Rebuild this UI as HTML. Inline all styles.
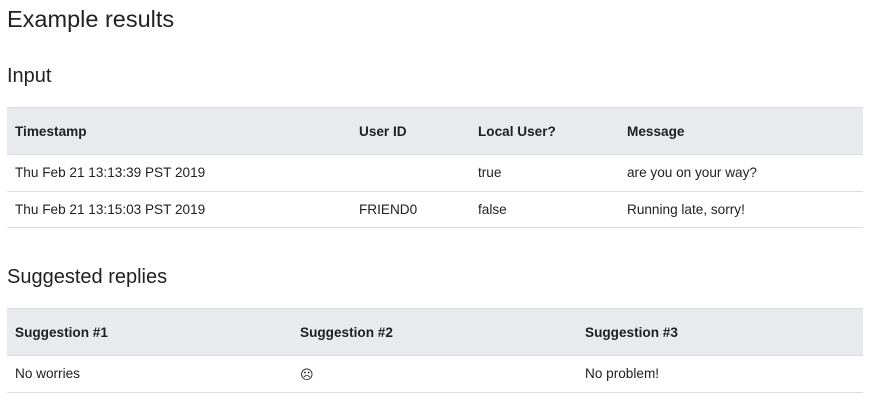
<!DOCTYPE html>
<html><head><style>
body{margin:0;background:#fff;font-family:"Liberation Sans",sans-serif;color:#202124;width:869px;height:404px;overflow:hidden}
h1{position:absolute;left:7px;top:5px;margin:0;font-size:23.5px;font-weight:normal;line-height:28px}
h2{position:absolute;left:7px;margin:0;font-size:20px;font-weight:normal;line-height:24px}
table{position:absolute;left:7px;width:856px;border-collapse:collapse;font-size:13.6px;table-layout:fixed}
th{background:#e8eaed;text-align:left;font-weight:bold;padding:0 8px;border-top:1px solid #dadce0;border-bottom:1px solid #dadce0;color:#202124}
td{padding:0 8px;border-bottom:1px solid #dadce0}
th,td{box-sizing:border-box}
</style></head><body>
<h1>Example results</h1>
<h2 style="top:64px">Input</h2>
<table style="top:107px">
<colgroup><col style="width:344px"><col style="width:119px"><col style="width:149px"><col></colgroup>
<tr><th style="height:47px">Timestamp</th><th>User ID</th><th>Local User?</th><th>Message</th></tr>
<tr><td style="height:36.5px">Thu Feb 21 13:13:39 PST 2019</td><td></td><td>true</td><td>are you on your way?</td></tr>
<tr><td style="height:36.5px">Thu Feb 21 13:15:03 PST 2019</td><td>FRIEND0</td><td>false</td><td>Running late, sorry!</td></tr>
</table>
<h2 style="top:265px">Suggested replies</h2>
<table style="top:308px">
<colgroup><col style="width:285px"><col style="width:285px"><col></colgroup>
<tr><th style="height:47px">Suggestion #1</th><th>Suggestion #2</th><th>Suggestion #3</th></tr>
<tr><td style="height:36.5px">No worries</td><td style="font-family:'DejaVu Sans',sans-serif;font-size:13px;padding-top:3px">☹</td><td>No problem!</td></tr>
</table>
</body></html>
